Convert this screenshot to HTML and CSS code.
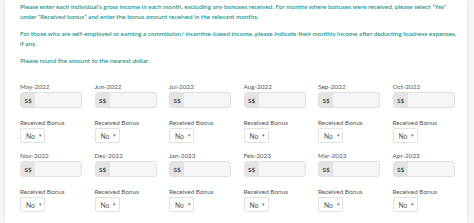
FILE: index.html
```html
<!DOCTYPE html>
<html lang="en">
<head>
  <meta charset="UTF-8">
  <title>Monthly Income</title>
  <link rel="stylesheet" href="styles.css">
</head>
<body>
  <div class="card">
    <div class="notes">
      <p>Please enter each individual’s gross income in each month, excluding any bonuses received. For months where bonuses were received, please select “Yes” under “Received bonus” and enter the bonus amount received in the relevant months.</p>
      <p>For those who are self-employed or earning a commission/ incentive-based income, please indicate their monthly income after deducting business expenses, if any.</p>
      <p>Please round the amount to the nearest dollar.</p>
    </div>

    <div class="months">
      <div class="month">
        <label>May-2022</label>
        <div class="amount"><span class="addon">S$</span><input type="text"></div>
        <label class="bonus-label">Received Bonus</label>
        <div class="select">No <span class="caret">▾</span></div>
      </div>
      <div class="month">
        <label>Jun-2022</label>
        <div class="amount"><span class="addon">S$</span><input type="text"></div>
        <label class="bonus-label">Received Bonus</label>
        <div class="select">No <span class="caret">▾</span></div>
      </div>
      <div class="month">
        <label>Jul-2022</label>
        <div class="amount"><span class="addon">S$</span><input type="text"></div>
        <label class="bonus-label">Received Bonus</label>
        <div class="select">No <span class="caret">▾</span></div>
      </div>
      <div class="month">
        <label>Aug-2022</label>
        <div class="amount"><span class="addon">S$</span><input type="text"></div>
        <label class="bonus-label">Received Bonus</label>
        <div class="select">No <span class="caret">▾</span></div>
      </div>
      <div class="month">
        <label>Sep-2022</label>
        <div class="amount"><span class="addon">S$</span><input type="text"></div>
        <label class="bonus-label">Received Bonus</label>
        <div class="select">No <span class="caret">▾</span></div>
      </div>
      <div class="month">
        <label>Oct-2022</label>
        <div class="amount"><span class="addon">S$</span><input type="text"></div>
        <label class="bonus-label">Received Bonus</label>
        <div class="select">No <span class="caret">▾</span></div>
      </div>

      <div class="month">
        <label>Nov-2022</label>
        <div class="amount"><span class="addon">S$</span><input type="text"></div>
        <label class="bonus-label">Received Bonus</label>
        <div class="select">No <span class="caret">▾</span></div>
      </div>
      <div class="month">
        <label>Dec-2022</label>
        <div class="amount"><span class="addon">S$</span><input type="text"></div>
        <label class="bonus-label">Received Bonus</label>
        <div class="select">No <span class="caret">▾</span></div>
      </div>
      <div class="month">
        <label>Jan-2023</label>
        <div class="amount"><span class="addon">S$</span><input type="text"></div>
        <label class="bonus-label">Received Bonus</label>
        <div class="select">No <span class="caret">▾</span></div>
      </div>
      <div class="month">
        <label>Feb-2023</label>
        <div class="amount"><span class="addon">S$</span><input type="text"></div>
        <label class="bonus-label">Received Bonus</label>
        <div class="select">No <span class="caret">▾</span></div>
      </div>
      <div class="month">
        <label>Mar-2023</label>
        <div class="amount"><span class="addon">S$</span><input type="text"></div>
        <label class="bonus-label">Received Bonus</label>
        <div class="select">No <span class="caret">▾</span></div>
      </div>
      <div class="month">
        <label>Apr-2023</label>
        <div class="amount"><span class="addon">S$</span><input type="text"></div>
        <label class="bonus-label">Received Bonus</label>
        <div class="select">No <span class="caret">▾</span></div>
      </div>
    </div>
  </div>
</body>
</html>
```

FILE: styles.css
```css
body {
  margin: 0;
  background: #f6f6f6;
  font-family: Lato, "Open Sans", sans-serif;
  overflow: hidden;
}

.card {
  margin-left: 5px;
  width: 462px;
  height: 223px;
  background: #fff;
  box-shadow: 0 0 3px rgba(0, 0, 0, 0.12);
  padding: 2px 0 0 15px;
  box-sizing: border-box;
}

.notes {
  width: 440px;
  color: #22958f;
  font-size: 6.35px;
  line-height: 10px;
  font-weight: 600;
}

.notes p {
  margin: 0 0 7px 0;
}

.notes p:last-child {
  margin-bottom: 0;
}

.months {
  margin-top: 17px;
  display: grid;
  grid-template-columns: repeat(6, 74.5px);
}

.month {
  display: flex;
  flex-direction: column;
  align-items: flex-start;
  padding-bottom: 9px;
}

.month label {
  font-size: 6.4px;
  line-height: 8px;
  color: #555;
  margin-bottom: 1px;
}

.month .bonus-label {
  margin-top: 11px;
}

.amount {
  display: flex;
  width: 62px;
  height: 16px;
  border: 1px solid #e0e0e0;
  border-radius: 3px;
  box-sizing: border-box;
  overflow: hidden;
  background: #f5f5f5;
}

.addon {
  width: 14px;
  background: #e4e4e4;
  color: #555;
  font-size: 6.4px;
  font-weight: bold;
  display: flex;
  align-items: center;
  justify-content: center;
}

.amount input {
  flex: 1;
  min-width: 0;
  border: none;
  background: transparent;
  padding: 0;
}

.select {
  width: 25px;
  height: 15px;
  border: 1px solid #e0e0e0;
  border-radius: 2px;
  box-sizing: border-box;
  background: #fff;
  font-size: 6.8px;
  color: #555;
  display: flex;
  align-items: center;
  padding-left: 5px;
  gap: 4px;
}

.caret {
  font-size: 4.5px;
  color: #777;
}
```
